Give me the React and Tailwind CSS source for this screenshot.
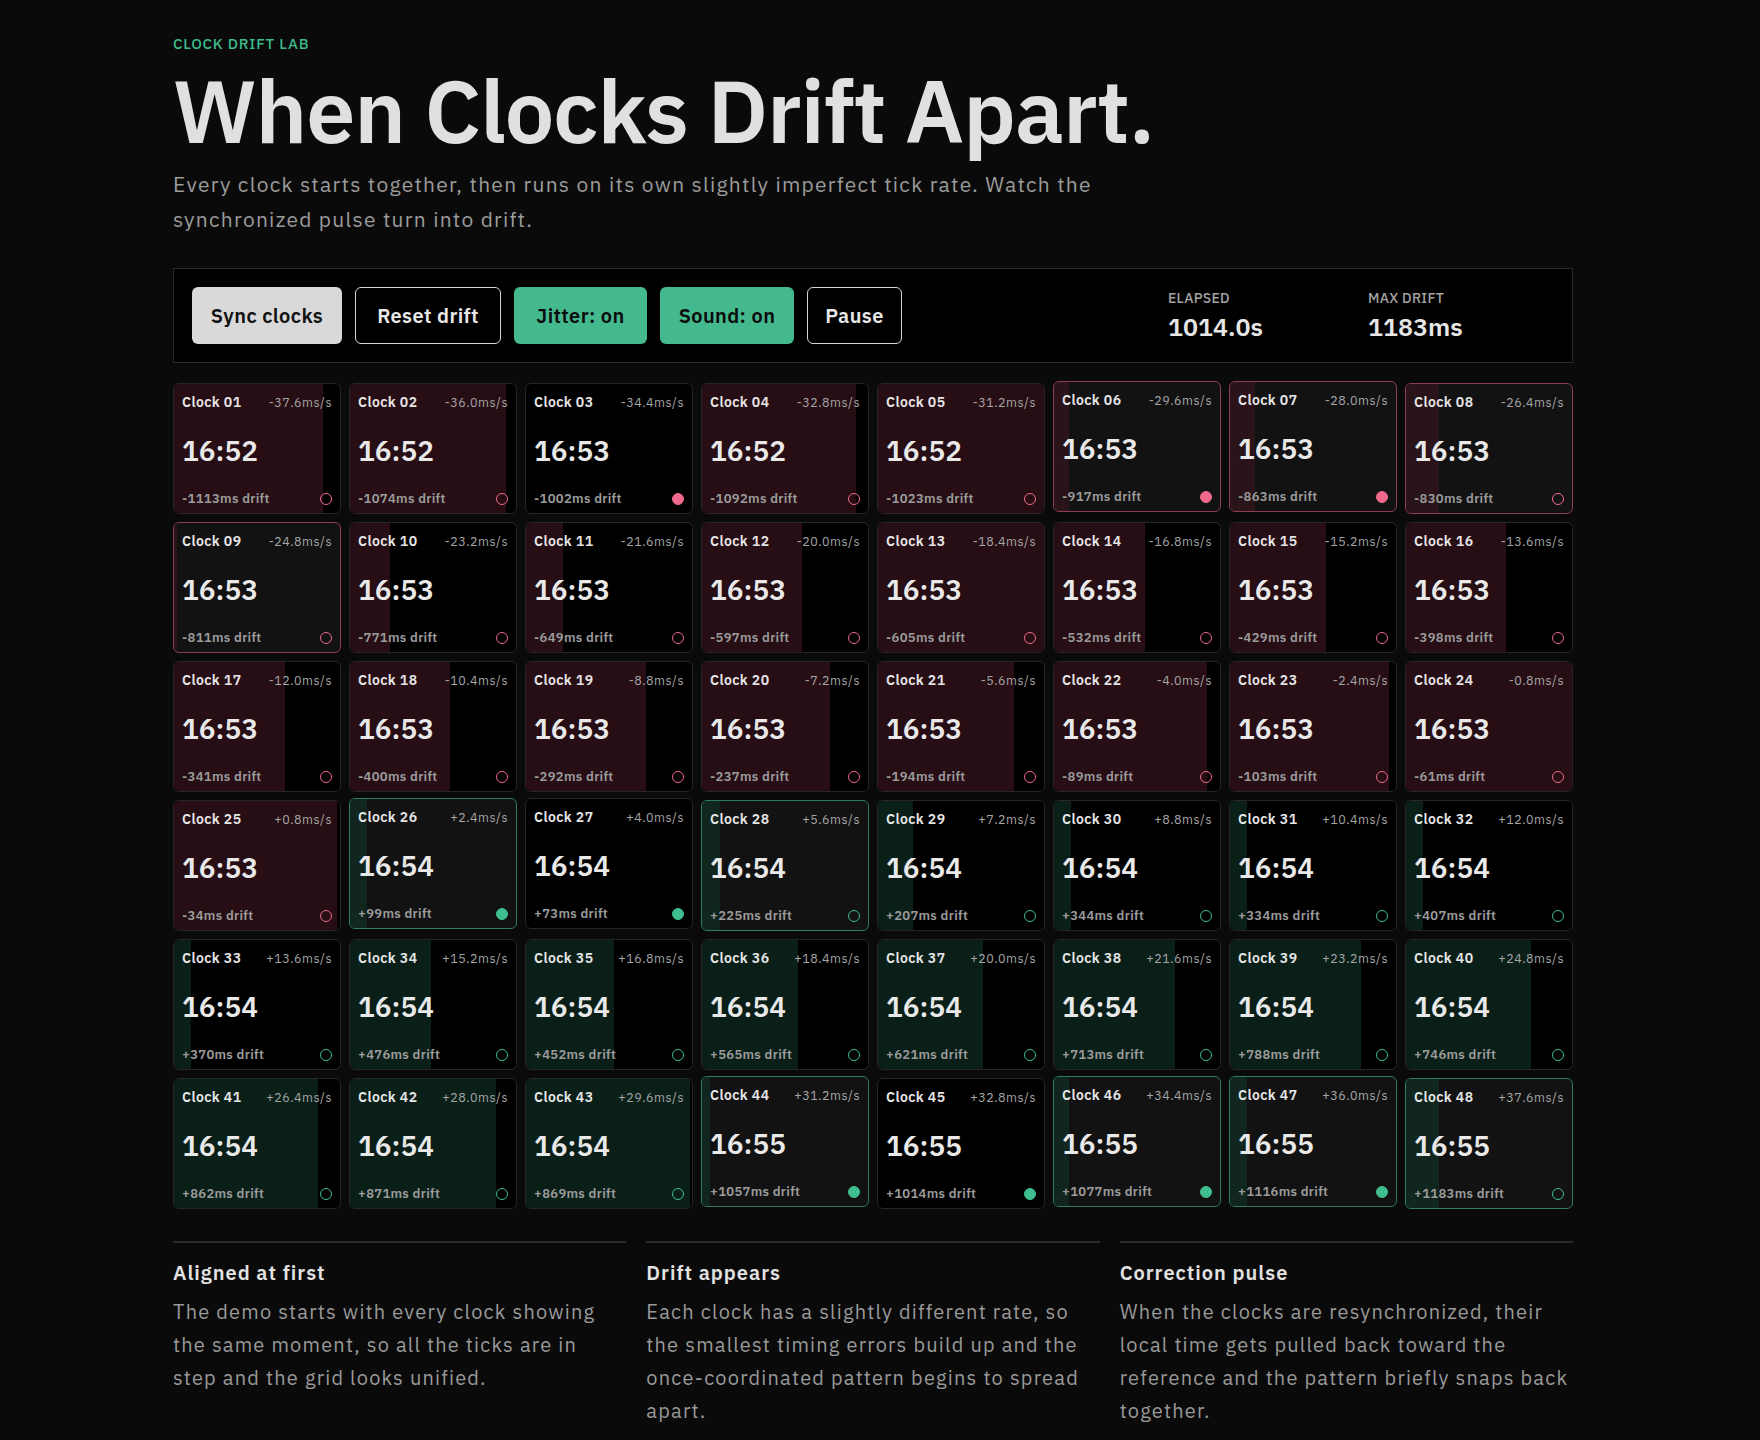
import React from "react";

const drifts = [
  -1113, -1074, -1002, -1092, -1023, -917, -863, -830,
  -811, -771, -649, -597, -605, -532, -429, -398,
  -341, -400, -292, -237, -194, -89, -103, -61,
  -34, 99, 73, 225, 207, 344, 334, 407,
  370, 476, 452, 565, 621, 713, 788, 746,
  862, 871, 869, 1057, 1014, 1077, 1116, 1183,
];

const fills = [
  0.9, 0.94, 0, 0.93, 1.0, 0.09, 0.15, 0.2,
  0.02, 0.24, 0.22, 0.6, 1.0, 0.55, 0.58, 0.6,
  0.67, 0.6, 0.72, 0.77, 0.82, 0.92, 0.96, 1.0,
  0.98, 0.1, 0.0, 0.11, 0.21, 0.1, 0.1, 0.1,
  0.1, 0.49, 0.53, 0.58, 0.63, 0.73, 0.79, 0.75,
  0.87, 0.88, 0.99, 0.05, 0, 0.09, 0.1, 0.2,
];

const times = {};
[1, 2, 4, 5].forEach((n) => (times[n] = "16:52"));
for (let n = 26; n <= 43; n++) times[n] = "16:54";
for (let n = 44; n <= 48; n++) times[n] = "16:55";

const highlighted = new Set([6, 7, 8, 9, 26, 28, 44, 46, 47, 48]);
const raised = new Set([6, 7, 26, 27, 44, 46, 47]);
const pulsing = new Set([3, 6, 7, 26, 27, 44, 45, 46, 47]);

const clocks = drifts.map((drift, i) => {
  const n = i + 1;
  const rate = -37.6 + i * 1.6;
  return {
    n,
    name: `Clock ${String(n).padStart(2, "0")}`,
    rate: `${rate > 0 ? "+" : "-"}${Math.abs(rate).toFixed(1)}ms/s`,
    time: times[n] || "16:53",
    drift,
    fill: fills[i],
    hl: highlighted.has(n),
    up: raised.has(n),
    on: pulsing.has(n),
  };
});

function ClockCard({ c }) {
  const neg = c.drift < 0;
  const border = c.hl
    ? neg
      ? "border-[#8e3c51]"
      : "border-[#2b7c60]"
    : "border-[#262626]";
  const bg = c.hl ? "bg-[#121212]" : "bg-black";
  const fill = neg
    ? c.hl
      ? "bg-[#2a1419]"
      : "bg-[#260e14]"
    : c.hl
    ? "bg-[#10261f]"
    : "bg-[#0b1f19]";
  const dot = neg
    ? c.on
      ? "bg-[#f0688c] border-[#f0688c]"
      : "border-[#f0688c]"
    : c.on
    ? "bg-[#3fbf8f] border-[#3fbf8f]"
    : "border-[#3fbf8f]";
  return (
    <div
      className={`relative h-[131px] overflow-hidden rounded-md border ${border} ${bg} ${
        c.up ? "-translate-y-0.5" : ""
      }`}
    >
      <div
        className={`absolute inset-y-0 left-0 ${fill}`}
        style={{ width: `${c.fill * 100}%` }}
      />
      <div className="relative flex h-full flex-col justify-between px-2 pb-[5px] pt-2">
        <div className="flex items-baseline justify-between">
          <span className="text-[14px] font-semibold leading-5 tracking-[0.03em] text-[#e6e6e6]">
            {c.name}
          </span>
          <span className="text-[12.5px] leading-5 tracking-[0.04em] text-[#a6a6a6]">
            {c.rate}
          </span>
        </div>
        <div className="text-[28px] font-semibold leading-none text-[#e9e9e9]">{c.time}</div>
        <div className="flex items-center justify-between">
          <span className="text-[13px] font-semibold leading-[18px] tracking-[0.025em] text-[#9c9c9c]">
            {c.drift > 0 ? "+" : ""}
            {c.drift}ms drift
          </span>
          <span className={`h-[12px] w-[12px] rounded-full border-[1.5px] ${dot}`} />
        </div>
      </div>
    </div>
  );
}

const notes = [
  {
    title: "Aligned at first",
    body: "The demo starts with every clock showing the same moment, so all the ticks are in step and the grid looks unified.",
  },
  {
    title: "Drift appears",
    body: "Each clock has a slightly different rate, so the smallest timing errors build up and the once-coordinated pattern begins to spread apart.",
  },
  {
    title: "Correction pulse",
    body: "When the clocks are resynchronized, their local time gets pulled back toward the reference and the pattern briefly snaps back together.",
  },
];

export default function App() {
  return (
    <div className="min-h-screen bg-[#0a0a0a] pr-[14px] font-['IBM_Plex_Sans','Inter','Noto_Sans',sans-serif] text-[#e4e4e4]">
      <div className="mx-auto max-w-[1400px] pb-16 pt-[33px]">
        <div className="text-[15px] font-medium uppercase leading-[22px] tracking-[0.05em] text-[#3dbb8c]">
          Clock Drift Lab
        </div>
        <h1 className="mt-[11px] text-[88px] font-semibold leading-none tracking-[-0.012em] text-[#e0e0e0]">
          When Clocks Drift Apart.
        </h1>
        <p className="mt-[13px] max-w-[960px] text-[21px] leading-[35px] tracking-[0.06em] text-[#9b9b9b]">
          Every clock starts together, then runs on its own slightly imperfect tick rate. Watch the
          synchronized pulse turn into drift.
        </p>

        <div className="mt-[31px] flex items-center justify-between border border-[#2a2a2a] bg-black p-[18px]">
          <div className="flex items-center gap-[13px]">
            <button className="h-[57px] w-[150px] rounded-md bg-[#d9d9d9] text-[20px] font-semibold tracking-[0.02em] text-[#111]">
              Sync clocks
            </button>
            <button className="h-[57px] w-[146px] rounded-md border border-[#d6d6d6] bg-black text-[20px] font-semibold tracking-[0.02em] text-[#e8e8e8]">
              Reset drift
            </button>
            <button className="h-[57px] w-[133px] rounded-md bg-[#43b98d] text-[20px] font-semibold tracking-[0.02em] text-[#0b0b0b]">
              Jitter: on
            </button>
            <button className="h-[57px] w-[134px] rounded-md bg-[#43b98d] text-[20px] font-semibold tracking-[0.02em] text-[#0b0b0b]">
              Sound: on
            </button>
            <button className="h-[57px] w-[95px] rounded-md border border-[#d6d6d6] bg-black text-[20px] font-semibold tracking-[0.02em] text-[#e8e8e8]">
              Pause
            </button>
          </div>
          <div className="flex gap-[14px]">
            <div className="w-[186px]">
              <div className="text-[14px] font-medium uppercase leading-[18px] tracking-[0.02em] text-[#a3a3a3]">
                Elapsed
              </div>
              <div className="mt-1 text-[25px] font-semibold leading-[32px] text-[#e6e6e6]">
                1014.0s
              </div>
            </div>
            <div className="w-[186px]">
              <div className="text-[14px] font-medium uppercase leading-[18px] tracking-[0.02em] text-[#a3a3a3]">
                Max drift
              </div>
              <div className="mt-1 text-[25px] font-semibold leading-[32px] text-[#e6e6e6]">
                1183ms
              </div>
            </div>
          </div>
        </div>

        <div className="mt-5 grid grid-cols-8 gap-2">
          {clocks.map((c) => (
            <ClockCard key={c.n} c={c} />
          ))}
        </div>

        <div className="mt-8 grid grid-cols-3 gap-5">
          {notes.map((n) => (
            <div key={n.title} className="border-t-2 border-[#2c2c2c] pt-4">
              <h2 className="text-[20px] font-semibold leading-7 tracking-[0.05em] text-[#e2e2e2]">
                {n.title}
              </h2>
              <p className="mt-2 text-[20px] leading-[33px] tracking-[0.06em] text-[#999999]">
                {n.body}
              </p>
            </div>
          ))}
        </div>
      </div>
    </div>
  );
}
